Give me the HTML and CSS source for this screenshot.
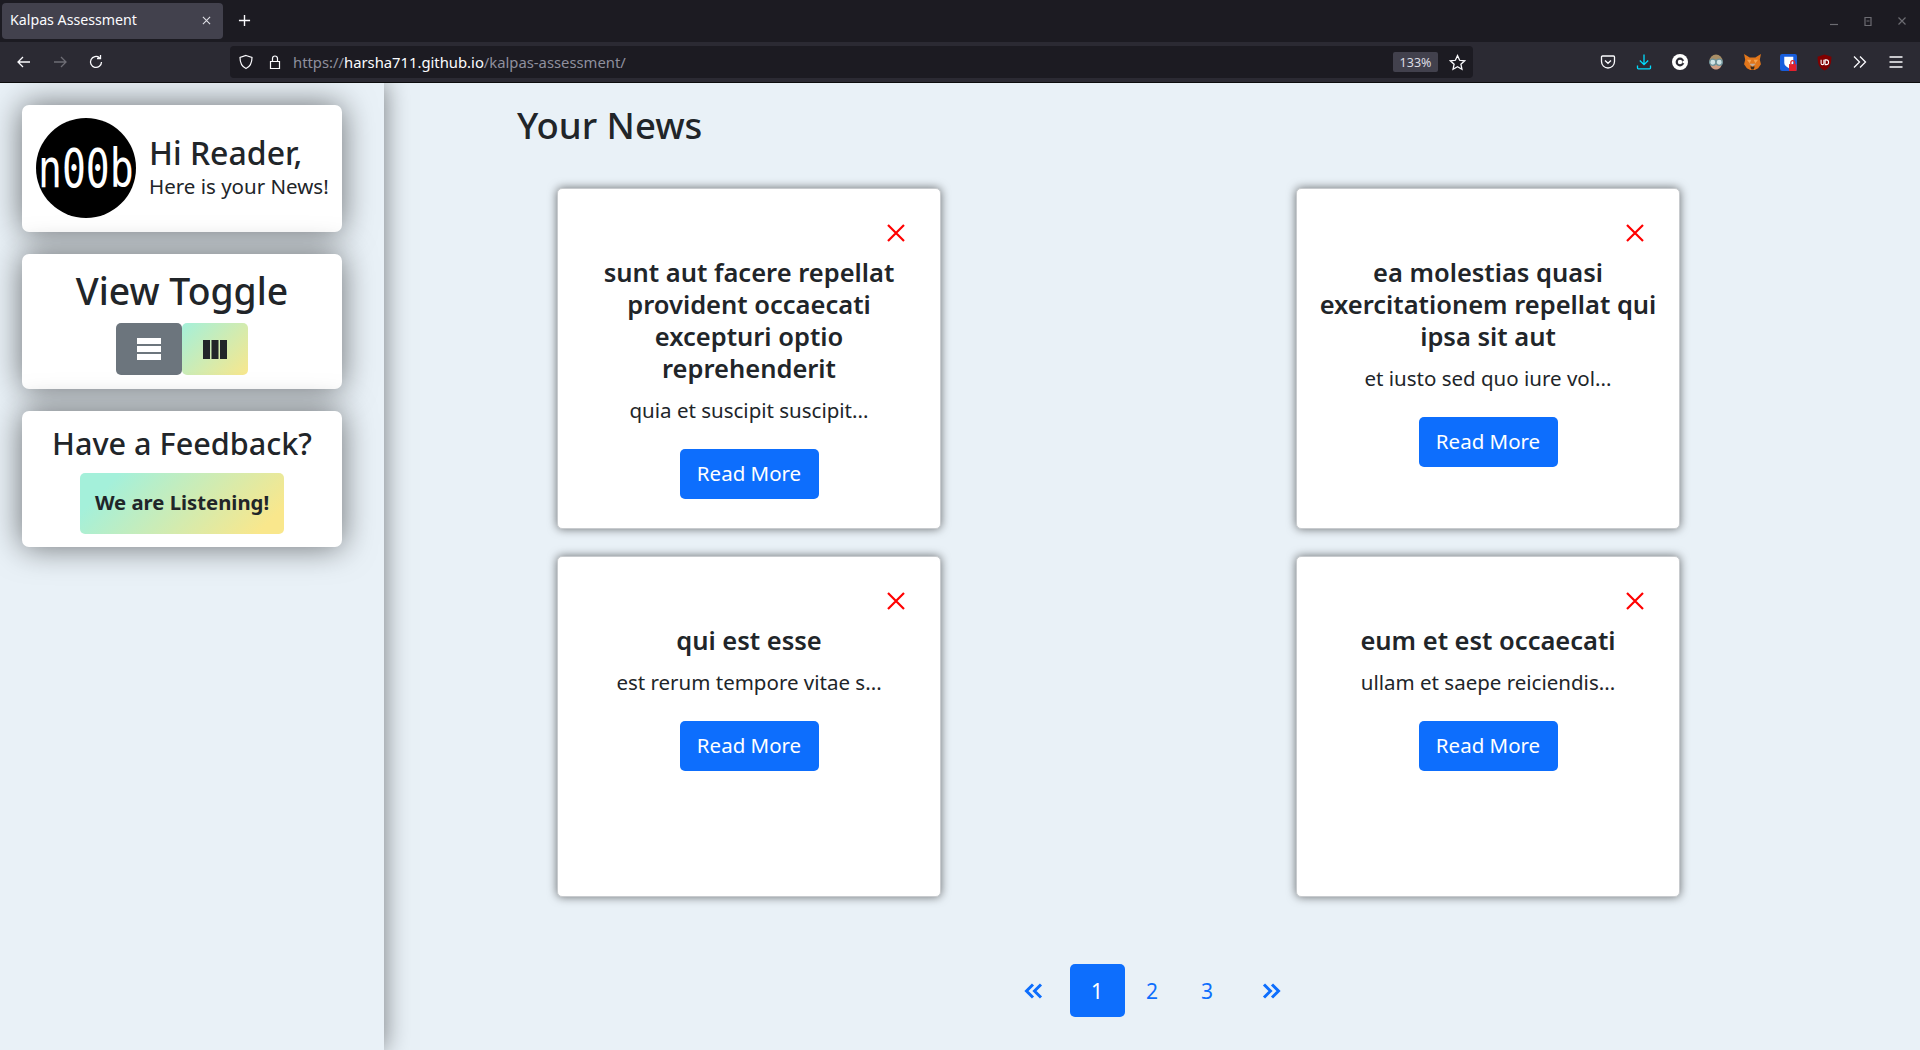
FILE: index.html
```html
<!DOCTYPE html>
<html lang="en">
<head>
<meta charset="utf-8">
<title>Kalpas Assessment</title>
<link rel="stylesheet" href="styles.css">
</head>
<body>
<header class="browser">
  <div class="tabbar">
    <div class="tab"><span class="tab-title">Kalpas Assessment</span>
      <svg class="tab-x" viewBox="0 0 10 10"><path d="M1 1l8 8M9 1l-8 8"/></svg>
    </div>
    <svg class="new-tab" viewBox="0 0 14 14"><path d="M7 1v12M1 7h12"/></svg>
    <div class="win-controls">
      <svg viewBox="0 0 10 10"><path d="M1 8.5h8"/></svg>
      <svg viewBox="0 0 10 10"><path d="M2 1.500h6v8H2zM3.500 5h3"/></svg>
      <svg viewBox="0 0 10 10"><path d="M1.500 1.500l7 7M8.500 1.500l-7 7"/></svg>
    </div>
  </div>
  <div class="toolbar">
    <div class="nav-group">
      <span class="tool"><svg viewBox="0 0 16 16"><path d="M14 8H2M7 3L2 8l5 5"/></svg></span>
      <span class="tool dim"><svg viewBox="0 0 16 16"><path d="M2 8h12M9 3l5 5-5 5"/></svg></span>
      <span class="tool"><svg viewBox="0 0 16 16"><path d="M13.500 8a5.500 5.500 0 1 1-2-4.300M12.500 1v3.500H9"/></svg></span>
    </div>
    <div class="urlbar">
      <svg class="url-icon" viewBox="0 0 16 16"><path d="M8 1.500l6 2c0 5-1.500 9-6 11-4.500-2-6-6-6-11z"/></svg>
      <svg class="url-icon lock" viewBox="0 0 16 16"><path d="M3.500 7.500h9v7h-9zM5.500 7.500V4.500a2.500 2.500 0 0 1 5 0v3"/></svg>
      <span class="url"><span class="url-dim">https://</span><span class="url-host">harsha711.github.io</span><span class="url-dim">/kalpas-assessment/</span></span>
      <span class="zoom-badge">133%</span>
      <svg class="star" viewBox="0 0 16 16"><path d="M8 1.500l2 4.400 4.700.5-3.500 3.200 1 4.700L8 12l-4.200 2.300 1-4.700-3.500-3.200 4.700-.5z"/></svg>
    </div>
    <div class="ext-group">
      <span class="tool"><svg viewBox="0 0 16 16"><path d="M2.500 2h11a1 1 0 0 1 1 1v4.500a6.500 6.500 0 0 1-13 0V3a1 1 0 0 1 1-1zM5 6.500l3 2.800 3-2.800"/></svg></span>
      <span class="tool cyan"><svg viewBox="0 0 16 16"><path d="M8 .5v10M3.800 6.500L8 10.700l4.200-4.200M1.500 11.500v2.500a.8.8 0 0 0 .8.800h11.400a.8.8 0 0 0 .8-.8v-2.500"/></svg></span>
      <span class="tool"><svg class="filled" viewBox="0 0 16 16"><circle cx="8" cy="8" r="8" fill="#fff"/><circle cx="8" cy="8" r="3.300" fill="none" stroke="#2b2a33" stroke-width="2.200"/><path d="M10.500 8h3" stroke="#fff" stroke-width="2.400"/></svg></span>
      <span class="tool"><svg class="filled" viewBox="0 0 16 16"><path d="M1.500 7a6.500 6.500 0 0 1 13 0v2h-13z" fill="#a98e66"/><path d="M2 9h12c0 3.800-2.800 6.500-6 6.500S2 12.800 2 9z" fill="#cf9f86"/><circle cx="4.800" cy="8.300" r="3.100" fill="#cfe3e6" stroke="#6f9299"/><circle cx="11.200" cy="8.300" r="3.100" fill="#cfe3e6" stroke="#6f9299"/></svg></span>
      <span class="tool"><svg class="filled fox" viewBox="0 0 16 16"><path d="M.5 .8l5 3.200h5l5-3.200-1 5.200 1 4-2.500 3.500-3 1.700h-4l-3-1.700L.5 10l1-4z" fill="#e2761b"/><path d="M3 6h4L5.500 9zM13 6H9l1.500 3z" fill="#f6a350"/><path d="M6 12h4l-1 2.700H7z" fill="#3a2a1c"/><path d="M5 9.500h6L8 12z" fill="#c0ad9e"/></svg></span>
      <span class="tool"><svg class="filled big" viewBox="0 0 16 16"><rect width="16" height="16" rx="2" fill="#175ddc"/><path d="M4 2.500h8.500v6c0 2-1.500 3.500-4 5-2.800-1.500-4.500-3-4.500-5z" fill="#fff"/><rect x="8.500" y="9.500" width="7" height="6.500" fill="#e2202c"/><path d="M10.200 9.500V8a1.800 1.800 0 0 1 3.600 0v1.500" fill="none" stroke="#e2202c" stroke-width="1.200"/></svg></span>
      <span class="tool"><svg class="filled big" viewBox="0 0 16 16"><path d="M8 .5l6.500 2c0 7-1.500 10.500-6.500 13-5-2.500-6.500-6-6.500-13z" fill="#800000"/><path d="M4.800 5.500v3.200a1.300 1.300 0 0 0 2.600 0V5.500M8.600 5.500v4.500h1a2.200 2.200 0 0 0 0-4.500z" fill="none" stroke="#fff" stroke-width="1"/></svg></span>
      <span class="tool"><svg viewBox="0 0 16 16"><path d="M2 2.500L7.500 8 2 13.500M8 2.500L13.500 8 8 13.500"/></svg></span>
      <span class="tool"><svg viewBox="0 0 16 16"><path d="M1.500 3h13M1.500 8h13M1.500 13h13"/></svg></span>
    </div>
  </div>
</header>

<div class="app">
  <aside class="sidebar">
    <section class="panel profile">
      <div class="avatar"><span class="avatar-text">n00b</span></div>
      <div class="greeting">
        <h4 class="hi">Hi Reader,</h4>
        <p class="here">Here is your News!</p>
      </div>
    </section>
    <section class="panel toggle">
      <h3 class="toggle-title">View Toggle</h3>
      <div class="toggle-buttons">
        <button class="tbtn tbtn-active" type="button"><svg viewBox="0 0 24 22"><path d="M0 0h24v6H0zM0 8h24v6H0zM0 16h24v6H0z"/></svg></button>
        <button class="tbtn tbtn-grad" type="button"><svg viewBox="0 0 24 19"><path d="M0 0h7v19H0zM8.500 0h7v19h-7zM17 0h7v19h-7z"/></svg></button>
      </div>
    </section>
    <section class="panel feedback">
      <h4 class="feedback-title">Have a Feedback?</h4>
      <button class="listen" type="button">We are Listening!</button>
    </section>
  </aside>

  <main class="content">
    <h3 class="news-title">Your News</h3>
    <div class="news-grid">
      <article class="card">
        <svg class="close" viewBox="0 0 18 18"><path d="M1 1l16 16M17 1L1 17"/></svg>
        <h5 class="card-title">sunt aut facere repellat provident occaecati excepturi optio reprehenderit</h5>
        <p class="card-text">quia et suscipit suscipit...</p>
        <a class="read" href="#">Read More</a>
      </article>
      <article class="card">
        <svg class="close" viewBox="0 0 18 18"><path d="M1 1l16 16M17 1L1 17"/></svg>
        <h5 class="card-title">ea molestias quasi exercitationem repellat qui ipsa sit aut</h5>
        <p class="card-text">et iusto sed quo iure vol...</p>
        <a class="read" href="#">Read More</a>
      </article>
      <article class="card">
        <svg class="close" viewBox="0 0 18 18"><path d="M1 1l16 16M17 1L1 17"/></svg>
        <h5 class="card-title">qui est esse</h5>
        <p class="card-text">est rerum tempore vitae s...</p>
        <a class="read" href="#">Read More</a>
      </article>
      <article class="card">
        <svg class="close" viewBox="0 0 18 18"><path d="M1 1l16 16M17 1L1 17"/></svg>
        <h5 class="card-title">eum et est occaecati</h5>
        <p class="card-text">ullam et saepe reiciendis...</p>
        <a class="read" href="#">Read More</a>
      </article>
    </div>
    <nav class="pager">
      <a class="page arrow" href="#"><svg viewBox="0 0 19 16"><path d="M9 1.500L2.500 8 9 14.500M17 1.500L10.500 8l6.500 6.500"/></svg></a>
      <a class="page current" href="#">1</a>
      <a class="page" href="#">2</a>
      <a class="page" href="#">3</a>
      <a class="page arrow" href="#"><svg viewBox="0 0 19 16"><path d="M2 1.500L8.500 8 2 14.500M10 1.500L16.500 8 10 14.500"/></svg></a>
    </nav>
  </main>
</div>
</body>
</html>
```

FILE: styles.css
```css
* { box-sizing: border-box; }
html, body { margin: 0; height: 100%; overflow: hidden; }
body {
  display: flex;
  flex-direction: column;
  font-family: "Noto Sans", "Open Sans", sans-serif;
  color: #212529;
  background: #e9f1f7;
}
h3, h4, h5, p { margin: 0; }

/* browser chrome */
.browser { flex: none; position: relative; z-index: 3; }
.tabbar {
  height: 42px;
  background: #1c1b22;
  display: flex;
  align-items: center;
  padding-left: 2px;
}
.tab {
  width: 221px;
  height: 36px;
  background: #42414d;
  border-radius: 4px;
  display: flex;
  align-items: center;
  justify-content: space-between;
  padding: 0 12px 2px 8px;
  color: #fbfbfe;
}
.tab-title { font-size: 14.200px; line-height: 20px; }
.tab-x { width: 9px; height: 9px; fill: none; stroke: #e0e0e6; stroke-width: 1.200; }
.new-tab { width: 13px; height: 13px; margin: 0 0 2px 15px; fill: none; stroke: #fbfbfe; stroke-width: 1.500; }
.win-controls { margin-left: auto; display: flex; gap: 24px; padding-right: 13px; }
.win-controls svg { width: 10px; height: 10px; fill: none; stroke: #6c6c72; stroke-width: 1.200; }
.toolbar {
  height: 41px;
  background: #2b2a33;
  border-bottom: 1px solid #0c0c0d;
  display: flex;
  align-items: center;
  padding: 0 6px;
}
.nav-group, .ext-group { display: flex; }
.ext-group { margin-left: auto; }
.tool { width: 36px; height: 36px; display: flex; align-items: center; justify-content: center; }
.tool svg { width: 16px; height: 16px; fill: none; stroke: #fbfbfe; stroke-width: 1.300; }
.tool svg.filled { stroke: none; }
.tool svg.big { width: 17px; height: 17px; }
.tool svg.fox { width: 19px; height: 18px; }
.tool.dim svg { stroke: #6e6d75; }
.tool.cyan svg { stroke: #00ddff; }
.urlbar {
  width: 1243px;
  height: 32px;
  margin-left: 116px;
  background: #1c1b22;
  border-radius: 4px;
  display: flex;
  align-items: center;
  padding-left: 8px;
}
.url-icon { width: 16px; height: 16px; fill: none; stroke: #fbfbfe; stroke-width: 1.200; }
.lock { margin-left: 13px; }
.url { margin-left: 10px; font-size: 14.800px; }
.url-dim { color: #8f8f9d; }
.url-host { color: #fbfbfe; }
.zoom-badge {
  margin-left: auto;
  width: 45px;
  height: 20px;
  background: #42414d;
  border-radius: 2px;
  color: #dcdce2;
  font-size: 12.500px;
  display: flex;
  align-items: center;
  justify-content: center;
}
.star { width: 17px; height: 17px; margin: 0 7px 0 11px; fill: none; stroke: #fbfbfe; stroke-width: 1.200; }

/* app */
.app { flex: 1; display: flex; min-height: 0; }
.sidebar {
  flex: none;
  width: 384px;
  background: #e9f1f7;
  padding: 22px 42px 0 22px;
  display: flex;
  flex-direction: column;
  gap: 22px;
  box-shadow: 0 0 24px rgba(0, 0, 0, .5);
  position: relative;
  z-index: 1;
  overflow: hidden;
}
.panel {
  background: #fff;
  border-radius: 7px;
  box-shadow: 0 0 32px rgba(0, 0, 0, .55);
  text-align: center;
}
.profile { height: 127px; display: flex; align-items: center; padding: 0 0 1px 14px; text-align: left; }
.avatar {
  width: 100px;
  height: 100px;
  border-radius: 50%;
  background: #000;
  color: #fff;
  display: flex;
  align-items: center;
  justify-content: center;
  overflow: hidden;
  flex: none;
}
.avatar-text {
  font-family: "DejaVu Sans Mono", monospace;
  font-size: 53px;
  line-height: 1;
  transform: scaleX(.75);
  font-weight: 400;
}
.greeting { margin-left: 13px; }
.hi { font-size: 32px; font-weight: 500; line-height: 36px; }
.here { font-size: 20.500px; line-height: 30px; white-space: nowrap; }
.toggle { height: 135px; padding-top: 14px; }
.toggle-title { font-size: 37.300px; font-weight: 500; line-height: 45px; }
.toggle-buttons { display: flex; justify-content: center; margin-top: 10px; }
.tbtn {
  width: 66px;
  height: 52px;
  border: 0;
  padding: 0;
  border-radius: 5px;
  display: flex;
  align-items: center;
  justify-content: center;
}
.tbtn-active { background: #6c757d; }
.tbtn-active svg { width: 24px; height: 22px; fill: #fff; }
.tbtn-grad { background: linear-gradient(135deg, #a4f0da, #f9e78c); }
.tbtn-grad svg { width: 24px; height: 19px; fill: #212529; }
.feedback { height: 136px; padding-top: 13px; }
.feedback-title { font-size: 30.600px; font-weight: 500; line-height: 38px; }
.listen {
  display: block;
  width: 204px;
  height: 61px;
  margin: 11px auto 0;
  padding: 0 0 3px;
  border: 0;
  border-radius: 5px;
  background: linear-gradient(135deg, #a4f0da 15%, #f9e78c 90%);
  color: #212529;
  font: 700 20.300px "Noto Sans", sans-serif;
}

/* main */
.content { flex: 1; min-width: 0; padding-top: 20px; }
.news-title { font-size: 36.500px; font-weight: 500; line-height: 45px; margin-left: 133px; }
.news-grid {
  display: grid;
  grid-template-columns: 384px 384px;
  grid-auto-rows: 341px;
  justify-content: space-between;
  row-gap: 27px;
  margin: 40px 240px 0 173px;
}
.card {
  background: #fff;
  border: 1px solid #c8cbce;
  border-radius: 5px;
  box-shadow: 0 0 10px rgba(0, 0, 0, .55);
  padding: 35px 22px 0;
  text-align: center;
  display: flex;
  flex-direction: column;
  align-items: center;
}
.close {
  width: 18px;
  height: 18px;
  align-self: flex-end;
  margin-right: 13px;
  fill: none;
  stroke: #f00;
  stroke-width: 2.200;
  flex: none;
}
.card-title { font-size: 25.500px; font-weight: 600; line-height: 32px; margin-top: 14px; }
.card-text { font-size: 20.500px; line-height: 32px; margin-top: 10px; }
.read {
  width: 139px;
  height: 50px;
  margin-top: 23px;
  padding-bottom: 2px;
  background: #0d6efd;
  color: #fff;
  border-radius: 5px;
  font-size: 20.500px;
  display: flex;
  align-items: center;
  justify-content: center;
  text-decoration: none;
  flex: none;
}

/* pager */
.pager { display: flex; align-items: center; justify-content: center; margin-top: 67px; }
.page {
  height: 53px;
  width: 55px;
  display: flex;
  align-items: center;
  justify-content: center;
  color: #0d6efd;
  font-size: 21px;
  text-decoration: none;
  border-radius: 5px;
}
.page.arrow { width: 73px; }
.page.arrow svg { width: 19px; height: 16px; fill: none; stroke: #0d6efd; stroke-width: 3; }
.page.current { background: #0d6efd; color: #fff; }
```
